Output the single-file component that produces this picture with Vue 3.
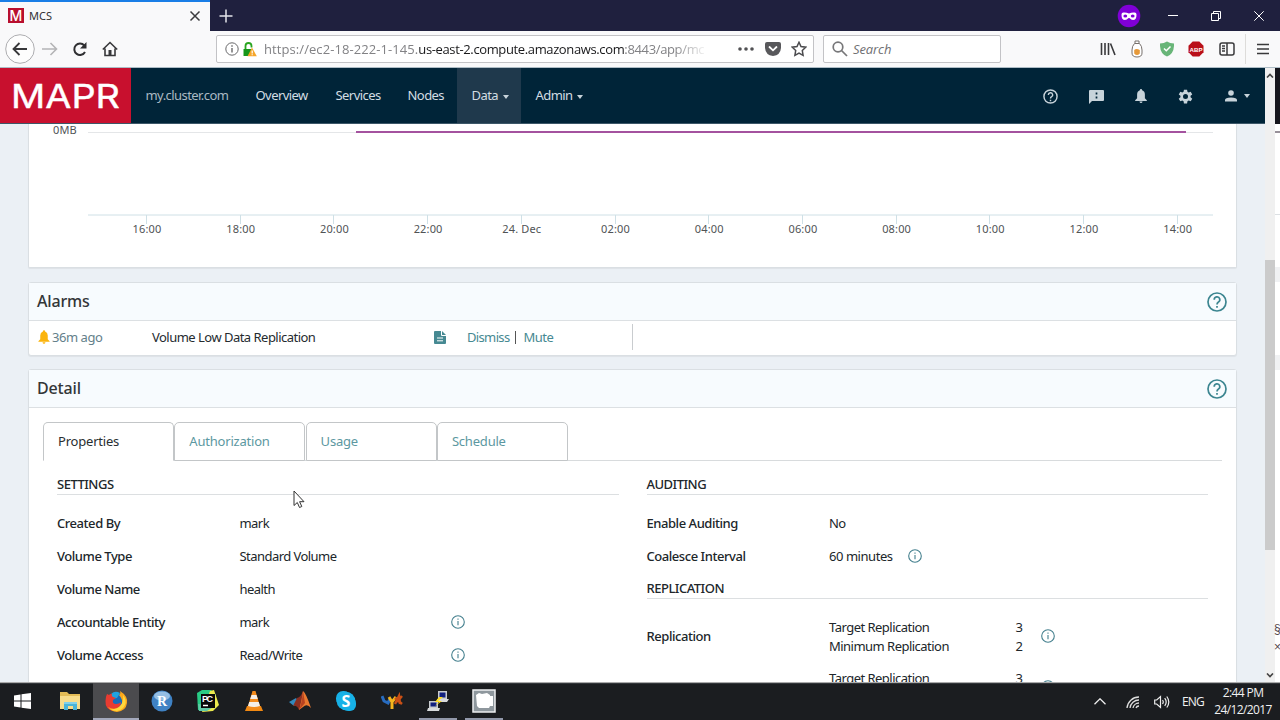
<template>
  <div class="desktop">
    <div class="titlebar">
      <div class="tab">
        <span class="favicon">M</span>
        <span class="tab-title">MCS</span>
        <svg class="tab-close" width="12" height="12" viewBox="0 0 12 12" fill="none" stroke="#3c3c3e" stroke-width="1.5">
          <path d="M1.5 1.5l9 9M10.5 1.5l-9 9"/>
        </svg>
      </div>
      <svg class="new-tab" width="14" height="14" viewBox="0 0 14 14" stroke="#e4e4ea" stroke-width="1.5">
        <path d="M7 .5v13M.5 7h13"/>
      </svg>
      <div class="window-controls">
        <svg width="24" height="24" viewBox="0 0 24 24">
          <circle cx="12" cy="12" r="11.3" fill="#8000d7"/>
          <path d="M4.500 10.500Q4.500 8.200 7 8.500Q9.500 8.400 12 9.500Q14.500 8.400 17 8.500Q19.500 8.200 19.500 10.500Q19.600 16 16 16Q14 16 12.800 14.300Q12 13.500 11.200 14.300Q10 16 8 16Q4.400 16 4.500 10.500z" fill="#fff"/>
          <ellipse cx="8.300" cy="12" rx="1.900" ry="1.500" fill="#8000d7"/>
          <ellipse cx="15.700" cy="12" rx="1.900" ry="1.500" fill="#8000d7"/>
        </svg>
        <svg width="10" height="10" viewBox="0 0 10 10" stroke="#fff"><path d="M0 4.500h10"/></svg>
        <svg width="10" height="10" viewBox="0 0 10 10" fill="none" stroke="#fff">
          <path d="M.5 2.500h7v7h-7zM2.500 2.500v-2h7v7h-2"/>
        </svg>
        <svg width="10" height="10" viewBox="0 0 10 10" stroke="#fff"><path d="M.3.3l9.400 9.400M9.700.3L.3 9.700"/></svg>
      </div>
    </div>

    <div class="toolbar">
      <svg class="back" width="30" height="30" viewBox="0 0 30 30" fill="none">
        <circle cx="15" cy="15" r="14.300" fill="#fdfdfd" stroke="#adadb0"/>
        <path d="M22 15H9M14.500 9L8.500 15l6 6" stroke="#38383a" stroke-width="1.800"/>
      </svg>
      <svg class="forward" width="16" height="14" viewBox="0 0 16 14" fill="none" stroke="#b4b4b6" stroke-width="1.600">
        <path d="M0 7h14M8.500 1l6 6-6 6"/>
      </svg>
      <svg class="reload" width="16" height="16" viewBox="0 0 16 16" fill="none" stroke="#2f2f31" stroke-width="2">
        <path d="M13 11A5.700 5.700 0 1 1 12.300 4.500"/>
        <path d="M14.500 1v6.500H8z" fill="#2f2f31" stroke="none"/>
      </svg>
      <svg class="home" width="16" height="16" viewBox="0 0 16 16" fill="none" stroke="#38383a" stroke-width="1.600">
        <path d="M.8 8.500L8 1.500l7.200 7M3 7.500v7h10v-7"/>
        <path d="M6.500 9h3v5h-3z" fill="#38383a" stroke="none"/>
      </svg>
      <div class="urlbar">
        <svg width="14" height="14" viewBox="0 0 14 14" fill="none" stroke="#68686a">
          <circle cx="7" cy="7" r="6.200"/><path d="M7 6v4.500M7 3.200v1.500" stroke-width="1.400"/>
        </svg>
        <svg class="lock" width="14" height="15" viewBox="0 0 14 15">
          <path d="M2.500 8V4a3 3 0 0 1 6 0v1.500" fill="none" stroke="#2aa520" stroke-width="1.800"/>
          <path d="M.5 7h9v7h-9z" fill="#16961a"/>
          <path d="M9 5.500l4.800 8.800H4.500z" fill="#f5a52a"/>
          <path d="M9.200 8.500v3M9.200 12.200v1" stroke="#fff" stroke-width="1.200"/>
        </svg>
        <span class="url">https://ec2-18-222-1-145.<b>us-east-2.compute.amazonaws.com</b><span class="path">:8443/app/mc</span></span>
        <svg class="dots" width="16" height="4" viewBox="0 0 16 4" fill="#515154">
          <circle cx="2" cy="2" r="1.800"/><circle cx="8" cy="2" r="1.800"/><circle cx="14" cy="2" r="1.800"/>
        </svg>
        <svg class="pocket" width="16" height="14" viewBox="0 0 16 14">
          <path d="M2 0h12q2 0 2 2v4q-.5 7-8 8Q.5 13 0 6V2Q0 0 2 0z" fill="#58585b"/>
          <path d="M4.500 5L8 8.300 11.500 5" fill="none" stroke="#fff" stroke-width="1.800" stroke-linecap="round"/>
        </svg>
        <svg class="star" width="16" height="16" viewBox="0 0 16 16" fill="none" stroke="#4b4b4e" stroke-width="1.500">
          <path d="M8 1.300l2 4.300 4.700.6-3.400 3.300.8 4.800L8 12l-4.100 2.300.8-4.800L1.300 6.200 6 5.600z"/>
        </svg>
      </div>
      <div class="searchbar">
        <svg width="16" height="16" viewBox="0 0 16 16" fill="none" stroke="#777779" stroke-width="1.700">
          <circle cx="6" cy="6" r="4.800"/><path d="M9.500 9.500l5.500 5.500"/>
        </svg>
        <span>Search</span>
      </div>
      <div class="extensions">
        <svg width="16" height="16" viewBox="0 0 16 16" stroke="#3a3a3c" stroke-width="1.600">
          <path d="M1.500 2v12M5 2v12M8.500 2v12M10.500 2.500l4.500 11.500"/>
        </svg>
        <svg width="12" height="18" viewBox="0 0 12 18" fill="none" stroke="#77706c">
          <path d="M4 3V1h4v2M3.500 3.500h5Q11 6 11 10v3q0 4-5 4t-5-4v-3q0-4 2.500-6.500z" fill="#fff"/>
          <path d="M3.200 10q2-2 5.600 0v3.500q-2.800 3-5.600 0z" fill="#e69939" stroke="none"/>
        </svg>
        <svg class="shield" width="14" height="16" viewBox="0 0 14 16">
          <path d="M7 .5Q10 2.500 14 2.500q.5 10-7 13-7.500-3-7-13Q4 2.500 7 .5z" fill="#68b578"/>
          <path d="M4 7.500l2.300 2.300L10.500 5.500" fill="none" stroke="#fff" stroke-width="1.500"/>
        </svg>
        <svg width="16" height="16" viewBox="0 0 16 16">
          <path d="M4.700.5h6.600l4.200 4.200v6.600l-4.200 4.200H4.700L.5 11.300V4.700z" fill="#b90f19"/>
          <text x="1.500" y="10.500" textLength="13" lengthAdjust="spacingAndGlyphs" class="abp">ABP</text>
        </svg>
        <svg width="16" height="14" viewBox="0 0 16 14" fill="none" stroke="#3a3a3c" stroke-width="1.500">
          <rect x="1" y="1" width="14" height="12" rx="2"/><path d="M8 1v12M3 4h3M3 6.500h3M3 9h3"/>
        </svg>
        <span class="divider"></span>
        <svg width="13" height="12" viewBox="0 0 13 12" stroke="#39393b" stroke-width="1.600">
          <path d="M0 1.500h12M0 6h12M0 10.500h12"/>
        </svg>
      </div>
    </div>

    <div class="viewport">
      <div class="page">
        <nav class="navbar">
          <div class="logo">
            <svg width="131" height="55" viewBox="0 0 131 55">
              <text x="11" y="40" textLength="109" lengthAdjust="spacingAndGlyphs">MAPR</text>
            </svg>
          </div>
          <div class="nav-links">
            <a class="cluster">my.cluster.com</a>
            <a v-for="item in navItems" :key="item.name" :class="{ active: item.active }">
              {{ item.name }}<i v-if="item.menu" class="caret"></i>
            </a>
          </div>
          <div class="nav-icons">
            <svg width="15" height="15" viewBox="0 0 24 24" fill="none" stroke="#c7d3da" stroke-width="2.300">
              <circle cx="12" cy="12" r="10.500"/><path d="M8.500 9.500a3.500 3.500 0 1 1 5 3.200Q12 13.500 12 15M12 17v2.500"/>
            </svg>
            <svg width="15" height="15" viewBox="0 0 15 15">
              <path d="M1 1h13q1 0 1 1v9q0 1-1 1H3l-3 3V2q0-1 1-1z" fill="#c7d3da"/>
              <path d="M7.500 3.500v2M7.500 7.500v2" stroke="#002438" stroke-width="1.700"/>
            </svg>
            <svg width="14" height="14" viewBox="0 0 16 18" fill="#c7d3da"><path :d="bell"/></svg>
            <svg width="15" height="15" viewBox="0 0 24 24" fill="#c7d3da">
              <path fill-rule="evenodd" d="M9.500 1h5l.6 3.400 2 1.100 3.200-1.200 2.500 4.300-2.700 2.200v2.400l2.700 2.200-2.500 4.300-3.200-1.200-2 1.100-.6 3.400h-5l-.6-3.400-2-1.100-3.200 1.200-2.500-4.300 2.700-2.200v-2.400L1.200 8.600l2.500-4.300 3.200 1.200 2-1.100zM12 8a4 4 0 1 0 0 8 4 4 0 0 0 0-8z"/>
            </svg>
            <div class="user">
              <svg width="12" height="12" viewBox="0 0 12 12" fill="#c7d3da">
                <circle cx="6" cy="3" r="2.800"/><path d="M0 11.500V10q0-2.600 6-2.600t6 2.600v1.500z"/>
              </svg>
              <i class="caret"></i>
            </div>
          </div>
        </nav>

        <main class="content">
          <section class="card chart">
            <svg width="1207" height="144" viewBox="0 0 1207 144">
              <text x="24" y="11">0MB</text>
              <path d="M59 9.500h1125" stroke="#e4e6e8"/>
              <path d="M327 9h830" stroke="#a4529f" stroke-width="2"/>
              <path d="M59 92h1125" stroke="#cfe0e6"/>
              <g v-for="(t, i) in ticks" :key="t">
                <path :d="`M${Math.round(117 + i * 93.7) + 0.5} 92v9`" stroke="#cfe0e6"/>
                <text :x="118 + i * 93.7" y="109.5" text-anchor="middle">{{ t }}</text>
              </g>
            </svg>
          </section>

          <section class="card alarms">
            <header class="card-head">
              <h2>Alarms</h2>
              <svg class="help" width="20" height="20" viewBox="0 0 20 20"><path :d="help"/></svg>
            </header>
            <div class="alarm-row">
              <svg class="alarm-bell" width="12" height="14" viewBox="0 0 16 18" fill="#fbb40c"><path :d="bell"/></svg>
              <span class="ago">36m ago</span>
              <span class="alarm-name">Volume Low Data Replication</span>
              <svg class="doc" width="12" height="13" viewBox="0 0 12 13">
                <path d="M1 0h7l4 4v8q0 1-1 1H1q-1 0-1-1V1q0-1 1-1z" fill="#468992"/>
                <path d="M7.500 0v4.500H12M3 7h6M3 9.800h6" fill="none" stroke="#fff"/>
              </svg>
              <span class="actions"><a>Dismiss</a><i></i><a>Mute</a></span>
            </div>
          </section>

          <section class="card detail">
            <header class="card-head">
              <h2>Detail</h2>
              <svg class="help" width="20" height="20" viewBox="0 0 20 20"><path :d="help"/></svg>
            </header>
            <div class="tabs">
              <a v-for="(t, i) in tabs" :key="t" :class="{ current: i === 0 }">{{ t }}</a>
            </div>
            <div class="columns">
              <div class="column">
                <h3>SETTINGS</h3>
                <div v-for="row in settings" :key="row.label" class="field">
                  <label>{{ row.label }}</label>
                  <span class="value">{{ row.value }}</span>
                  <svg v-if="row.info" class="info" width="14" height="14" viewBox="0 0 14 14"><path :d="info"/></svg>
                </div>
              </div>
              <div class="column">
                <h3>AUDITING</h3>
                <div class="field"><label>Enable Auditing</label><span>No</span></div>
                <div class="field">
                  <label>Coalesce Interval</label><span class="minutes">60 minutes</span>
                  <svg class="info" width="14" height="14" viewBox="0 0 14 14"><path :d="info"/></svg>
                </div>
                <h3 class="replication-title">REPLICATION</h3>
                <div v-for="group in replication" :key="group.id" class="field double">
                  <label>{{ group.label }}</label>
                  <div class="pairs">
                    <p v-for="pair in group.pairs" :key="pair[0]"><span>{{ pair[0] }}</span><span>{{ pair[1] }}</span></p>
                  </div>
                  <svg class="info" width="14" height="14" viewBox="0 0 14 14"><path :d="info"/></svg>
                </div>
              </div>
            </div>
          </section>
        </main>
      </div>
      <div class="scrollbar">
        <svg width="8" height="5" viewBox="0 0 8 5"><path d="M1 4.500l3-3 3 3" fill="none" stroke="#444" stroke-width="1.600"/></svg>
        <div class="thumb"></div>
        <svg class="down" width="8" height="5" viewBox="0 0 8 5"><path d="M1 .5l3 3 3-3" fill="none" stroke="#444" stroke-width="1.600"/></svg>
      </div>
      <div class="edge"><span>&sect;</span><span>&times;</span></div>
    </div>

    <div class="taskbar">
      <div class="task start"><svg width="17" height="16" viewBox="0 0 17 16" fill="#fff">
        <path d="M0 2.500l6.500-1v6H0zM7.500 1.300L17 0v7.500H7.500zM0 8.500h6.500v6l-6.500-1zM7.500 8.500H17V16l-9.500-1.300z"/>
      </svg></div>
      <div class="task"><svg width="22" height="20" viewBox="0 0 22 20">
        <path d="M1 1h7l2 2h11v15H1z" fill="#e3bb56"/><path d="M1 5h20v13H1z" fill="#f8dc8b"/>
        <path d="M5 19v-8h13v8h-4v-4H9v4z" fill="#4bb3d8"/><path d="M5 11h13v2H5z" fill="#83d0ea"/>
      </svg></div>
      <div class="task open focused"><svg width="24" height="24" viewBox="0 0 24 24">
        <circle cx="12.500" cy="12.500" r="8.500" fill="#176bb8"/>
        <path d="M7 5Q11 1 16 4l-3 5-6 1z" fill="#20a3e1"/>
        <path d="M3 5l2 1q2-2 3-1-1 2 1 3l3 1-3 2q-1 4 3 4 3 0 5-2 0 3-2 5l-6 4Q1 20 1.500 12 1.500 8 3 5z" fill="#e83b31"/>
        <path d="M16 2q8 5 7 12-1 8-10 9-6-.5-9-5 5 3 9 1 6-2 5-8-1-3-3-5 2-1 1-4z" fill="#fba81c"/>
        <path d="M19 6q4 5 2 10-2 5-8 6-4 0-7-2 6 1 10-3 4-4 3-11z" fill="#ffd83d"/>
      </svg></div>
      <div class="task"><svg width="22" height="22" viewBox="0 0 22 22">
        <circle cx="11" cy="11" r="10.500" fill="#3f82c4"/><ellipse cx="11" cy="6" rx="8" ry="4.500" fill="#95bee3"/>
        <text x="11" y="16" text-anchor="middle" class="r-text">R</text>
      </svg></div>
      <div class="task"><svg width="24" height="24" viewBox="0 0 24 24">
        <path d="M1 4l5-3h9l5 5v11l-8 5-10-1z" fill="#28cb84"/><path d="M14 2l4-1 5 15-6 6-11 1z" fill="#ebe94e"/>
        <path d="M2 15l9 1 8 1-8 5H3z" fill="#62cba7"/>
        <path d="M5 5h14v14H5z" fill="#090909"/>
        <text x="6" y="13" textLength="11" class="pc-text">PC</text><path d="M7 16.500h5" stroke="#fff" stroke-width="1.500"/>
      </svg></div>
      <div class="task"><svg width="20" height="22" viewBox="0 0 20 22">
        <path d="M3 16h14l2 5H1z" fill="#f28912"/><path d="M8.500 1h3l5 17q-6.500 3-13 0z" fill="#f28a1b"/>
        <path d="M7.500 5h5l1.300 4H6.200zM5.200 12h9.600l1.200 4q-6 2-12 0z" fill="#f4eee7"/>
      </svg></div>
      <div class="task"><svg width="24" height="22" viewBox="0 0 24 22">
        <path d="M1 12l7-4 3 4-5 4z" fill="#3389bd"/><path d="M5 16l4-8q4-1 6-7l1 12-5 7q-2-5-6-4z" fill="#8a2e21"/>
        <path d="M15 1q3 2 8 17-4-5-8-1l-4 3q2-6 4-19z" fill="#e97930"/><path d="M15 1l2 12-6 7q3-7 4-19z" fill="#b84220"/>
      </svg></div>
      <div class="task"><svg width="22" height="22" viewBox="0 0 22 22">
        <rect x="1" y="1" width="15" height="15" rx="7" fill="#17b1e7"/><rect x="7" y="7" width="14" height="14" rx="6" fill="#17b1e7"/>
        <circle cx="11" cy="11" r="9.300" fill="#17b1e7"/>
        <text x="11" y="17" text-anchor="middle" class="s-text">S</text>
      </svg></div>
      <div class="task"><svg width="22" height="18" viewBox="0 0 22 18" fill="none" stroke-width="3">
        <path d="M1 4l2 5 4 2 2-4" stroke="#286cc0"/><path d="M8 5l3 5 4-5M11 10v7" stroke="#f5b51e"/>
        <path d="M14 12l4-8 1 8M14 6l7 6M21 4l-5 6" stroke="#c94f15" stroke-width="2.500"/>
      </svg></div>
      <div class="task open"><svg width="22" height="22" viewBox="0 0 22 22">
        <path d="M11 1h9v9h-9zM2 11h9v8H2z" fill="#c9ccd0"/><path d="M12.500 2.500h6v5h-6zM3.500 12.500h6v4h-6z" fill="#101f7e"/>
        <path d="M10 9h12l-2 3h-9zM1 18h12l-1 3H0z" fill="#d8dadc"/><path d="M12 7l-4 5h4l-4 4 7-5h-4l5-4z" fill="#ffdc22"/>
      </svg></div>
      <div class="task open"><svg width="24" height="24" viewBox="0 0 24 24">
        <path d="M1 1h22v22H1z" fill="#8e979d" stroke="#eef0f1" stroke-width="1.500"/>
        <path d="M4 6l3-2 3 1 5-1 3 2v1h3v10h-3l-1 2H7l-2-2z" fill="#fff"/>
      </svg></div>

      <div class="tray">
        <svg width="12" height="7" viewBox="0 0 12 7" fill="none" stroke="#eee" stroke-width="1.300"><path d="M.5 6.200L6 .8l5.500 5.400"/></svg>
        <svg width="14" height="14" viewBox="0 0 14 14" fill="none" stroke="#dedede" stroke-width="1.300">
          <path d="M1 13A12 12 0 0 1 13 2M4 13a9 9 0 0 1 9-8M7 13a6 6 0 0 1 6-5M10 13a3 3 0 0 1 3-2"/>
        </svg>
        <svg width="16" height="14" viewBox="0 0 16 14" fill="none" stroke="#eee" stroke-width="1.200">
          <path d="M.7 5v4h2L6.500 12.500v-11L2.700 5zM8.500 5q1.500 2 0 4M10.700 3.200q3 3.800 0 7.600M12.800 1.500q4 5.500 0 11"/>
        </svg>
        <span class="lang">ENG</span>
        <div class="clock"><span>2:44 PM</span><span>24/12/2017</span></div>
      </div>
    </div>

    <svg class="pointer" width="12" height="19" viewBox="0 0 12 19">
      <path d="M1 1v14.500l3.300-3 2.200 5 2.300-1-2.200-4.800H11z" fill="#fff" stroke="#333"/>
    </svg>
  </div>
</template>

<script setup>
const navItems = [
  { name: 'Overview' },
  { name: 'Services' },
  { name: 'Nodes' },
  { name: 'Data', menu: true, active: true },
  { name: 'Admin', menu: true }
]

const ticks = ['16:00', '18:00', '20:00', '22:00', '24. Dec', '02:00', '04:00', '06:00', '08:00', '10:00', '12:00', '14:00']
const tabs = ['Properties', 'Authorization', 'Usage', 'Schedule']

const settings = [
  { label: 'Created By', value: 'mark' },
  { label: 'Volume Type', value: 'Standard Volume' },
  { label: 'Volume Name', value: 'health' },
  { label: 'Accountable Entity', value: 'mark', info: true },
  { label: 'Volume Access', value: 'Read/Write', info: true }
]

const replication = [
  { id: 1, label: 'Replication', pairs: [['Target Replication', 3], ['Minimum Replication', 2]] },
  { id: 2, label: '', pairs: [['Target Replication', 3]] }
]

// shared icon shapes
const bell = 'M8 0q1.500 0 1.500 1.700Q13 3 13 7v5l2.500 2.500v.8H.5v-.8L3 12V7q0-4 3.500-5.300Q6.500 0 8 0zM6 16h4q-.3 2-2 2t-2-2z'
const help = 'M10 1a9 9 0 1 0 0 18 9 9 0 0 0 0-18zM7.200 7.700a2.800 2.800 0 1 1 4 2.500Q10 11 10 12.500M10 14v1.800'
const info = 'M7 .7a6.300 6.300 0 1 0 0 12.600A6.300 6.300 0 0 0 7 .7zM7 6v4.300M7 3.500v1.300'
</script>

<style>
body {
  margin: 0;
  overflow: hidden;
}
</style>

<style scoped>
.desktop {
  position: relative;
  width: 1280px;
  height: 720px;
  overflow: hidden;
  display: flex;
  flex-direction: column;
  background: #fff;
  color: #252b2f;
  font-family: 'Noto Sans', 'Open Sans', sans-serif;
  font-size: 13px;
}

svg { display: block; flex-shrink: 0; }

.titlebar {
  height: 31px;
  display: flex;
  align-items: center;
  background: #1f203e;
}

.tab {
  box-sizing: border-box;
  width: 210px;
  height: 31px;
  padding: 0 9px 2px 8px;
  border-top: 2px solid #1a7ee6;
  background: #f9f9fa;
  display: flex;
  align-items: center;
}

.favicon {
  width: 16px;
  height: 15px;
  background: #b80f2e;
  color: #fff;
  font: 500 14px/15px 'Inter', sans-serif;
  text-align: center;
}

.tab-title { margin-left: 5px; font-size: 11px; color: #303033; }
.tab-close { margin-left: auto; }
.new-tab { margin-left: 9px; }

.window-controls {
  margin-left: auto;
  padding-right: 16px;
  display: flex;
  align-items: center;
  gap: 33px;
}

.window-controls svg:first-child { margin-right: -6px; }

.toolbar {
  box-sizing: border-box;
  height: 37px;
  padding: 0 10px 0 5px;
  background: #f9f9fa;
  border-bottom: 1px solid #aebdc6;
  display: flex;
  align-items: center;
}

.forward { margin-left: 7px; }
.reload { margin-left: 14px; }
.home { margin-left: 14px; }

.urlbar, .searchbar {
  box-sizing: border-box;
  height: 28px;
  border: 1px solid #c3c3c6;
  background: #fff;
  border-radius: 2px;
  display: flex;
  align-items: center;
  font-family: 'Open Sans', sans-serif;
}

.urlbar { width: 598px; margin-left: 98px; padding: 0 6px 0 8px; }
.lock { margin-left: 4px; }

.url {
  width: 446px;
  margin-left: 7px;
  overflow: hidden;
  white-space: nowrap;
  color: #828285;
  letter-spacing: 0.08px;
  -webkit-mask-image: linear-gradient(90deg, #000 410px, transparent 444px);
  mask-image: linear-gradient(90deg, #000 410px, transparent 444px);
}

.url b { font-weight: 400; color: #18181a; letter-spacing: -0.37px; }
.url .path { letter-spacing: -0.35px; }
.dots { margin-left: auto; margin-right: -1px; }
.pocket { margin-left: 12px; }
.star { margin-left: 10px; }

.searchbar {
  width: 178px;
  margin-left: 9px;
  padding-left: 8px;
  gap: 5px;
  font-style: italic;
  color: #707073;
  letter-spacing: -0.1px;
}

.extensions {
  margin-left: auto;
  display: flex;
  align-items: center;
  gap: 14.6px;
}

.shield { margin-left: 2px; }
.divider { width: 1px; height: 30px; background: #dddcda; margin: 0 -4px; }
.abp { font: 700 6px 'Liberation Sans', sans-serif; fill: #fff; }

.viewport { height: 615px; display: flex; }

.page {
  width: 1265px;
  height: 615px;
  overflow: hidden;
  background: #ebf0f5;
}

.navbar {
  box-sizing: border-box;
  height: 56px;
  background: #002438;
  border-bottom: 1px solid #3c5768;
  display: flex;
  color: #d3dde3;
}

.logo { width: 131px; height: 55px; background: #c8102e; }
.logo text { font: 400 33px 'Inter', sans-serif; fill: #fff; stroke: #fff; stroke-width: 0.4; }

.nav-links {
  display: grid;
  grid-template-columns: 110px 80px 72px 64px 64px 80px;
}

.nav-links a {
  padding-left: 14.5px;
  line-height: 55px;
  white-space: nowrap;
  letter-spacing: -0.56px;
}

.nav-links .cluster { color: #aab9c2; }
.nav-links .active { background: #1f394c; }

.caret {
  display: inline-block;
  margin-left: 4.5px;
  border: 3.5px solid transparent;
  border-top: 4px solid #c7d3da;
  border-bottom: 0;
  vertical-align: 1px;
}

.nav-icons {
  margin-left: auto;
  padding: 1px 15px 0 0;
  display: flex;
  align-items: center;
  gap: 30.3px;
}

.user { display: flex; align-items: center; gap: 3px; margin-left: 1px; }

.content {
  width: 1209px;
  margin-left: 28px;
  display: flex;
  flex-direction: column;
  gap: 14px;
}

.card {
  box-sizing: border-box;
  flex-shrink: 0;
  background: #fff;
  border: 1px solid #dadfe3;
  border-radius: 3px;
  box-shadow: 0 1px 1px rgba(0, 0, 0, 0.06);
}

.chart { height: 144px; border-top: 0; border-radius: 0 0 2px 2px; }
.chart svg { margin-top: -1px; }
.chart text { font-size: 11px; fill: #505355; letter-spacing: 0.15px; }

.card-head {
  box-sizing: border-box;
  height: 38px;
  padding: 0 9px 0 8px;
  display: flex;
  align-items: center;
  justify-content: space-between;
  background: #f7fbfe;
  border-bottom: 1px solid #dce0e3;
}

.card-head h2 {
  margin: 0;
  padding-bottom: 2px;
  font-size: 16px;
  font-weight: 500;
  color: #333638;
  letter-spacing: -0.15px;
}

.help { fill: none; stroke: #3b8590; stroke-width: 1.7; }

.alarms { height: 74px; margin-bottom: -1px; }

.alarm-row { height: 32px; display: flex; align-items: center; padding-left: 9px; letter-spacing: -0.52px; }
.ago { width: 100px; margin-left: 2px; color: #64808a; letter-spacing: -0.45px; }
.alarm-name { width: 282px; }

.actions {
  box-sizing: border-box;
  width: 166px;
  height: 26px;
  margin-left: 21px;
  border-right: 1px solid #c9cccf;
  display: flex;
  align-items: center;
  color: #468992;
}

.actions a:first-child { letter-spacing: -0.65px; }
.actions i { width: 1px; height: 13px; margin: 0 7px 0 6px; background: #555; }

.detail { height: 480px; }

.tabs {
  height: 39px;
  margin: 14px 14px 0;
  display: flex;
  box-shadow: inset 0 -1px #d8dbdd;
}

.tabs a {
  box-sizing: border-box;
  width: 131px;
  height: 39px;
  margin-right: 0.3px;
  padding-left: 14px;
  line-height: 37px;
  background: #fff;
  border: 1px solid #c3c6c8;
  border-radius: 5px 5px 0 0;
  color: #5c98a1;
  letter-spacing: -0.2px;
}

.tabs .current { color: #292e31; border-bottom-color: #fff; }

.columns { display: flex; gap: 28px; padding: 14px 28px 0; color: #20262a; }
.column { width: 562px; }

.column h3 {
  box-sizing: border-box;
  height: 20px;
  margin: 0 0 12px;
  border-bottom: 1px solid #dcdfe1;
  font-size: 13px;
  line-height: 19px;
  font-weight: 500;
  letter-spacing: -0.5px;
}

.field { height: 32.9px; display: flex; align-items: center; letter-spacing: -0.55px; }
.field label { width: 182.5px; font-weight: 500; letter-spacing: -0.45px; }
.value { width: 211.5px; }
.info { fill: none; stroke: #437f8d; stroke-width: 1.1; }
.minutes { width: 79px; letter-spacing: -0.45px; }

.column .replication-title { margin: 6px 0 18px; }
.double { height: 39px; margin-bottom: 12px; letter-spacing: -0.52px; }
.pairs { align-self: flex-start; padding-top: 1px; }
.pairs p { width: 193.5px; height: 19px; margin: 0; line-height: 19px; display: flex; justify-content: space-between; }
.double .info { margin-left: 18px; }

.scrollbar {
  box-sizing: border-box;
  width: 10px;
  height: 615px;
  padding: 5px 0;
  background: #f0f0f0;
  display: flex;
  flex-direction: column;
  align-items: center;
}

.thumb { width: 10px; height: 290px; margin-top: 182px; background: #cbcbcb; }
.down { margin-top: auto; }

/* sliver of the neighbouring window */
.edge {
  box-sizing: border-box;
  width: 5px;
  padding-top: 552px;
  font: 12px/18px 'Liberation Sans', sans-serif;
  color: #55474c;
  background: linear-gradient(#15151c 56px, #fff 56px 63px, #98919a 63px 65px, #fff 65px 146px, #dce0e3 146px 147px, #fff 147px 199px, #f0f1f3 199px 214px, #fff 214px 287px, #f0f1f3 287px 302px, #fff 302px);
}

.edge span { display: block; margin-left: -1px; }

.taskbar {
  position: relative;
  height: 37px;
  background: #1b1d20;
  display: flex;
  box-shadow: inset 0 1px #33363a, 0 -1px #aaa;
}

.task {
  box-sizing: border-box;
  width: 46px;
  height: 37px;
  padding: 0 0 1px;
  display: flex;
  align-items: center;
  justify-content: center;
}

.task.start { width: 47px; padding-right: 2px; }
.task.open { background: linear-gradient(#9298aa, #9298aa) center bottom / 38px 2px no-repeat; }
.task.focused { background: #4b4b4e; box-shadow: inset 0 -2px #a3a8bb; }
.r-text { font: 700 14px 'Liberation Serif', serif; fill: #fff; }
.pc-text { font: 700 9px 'Liberation Sans', sans-serif; fill: #fff; }
.s-text { font: 700 16px 'Open Sans', sans-serif; fill: #fff; }

.tray {
  margin-left: auto;
  display: flex;
  align-items: center;
  color: #f1f1f1;
  font: 12px 'Open Sans', sans-serif;
}

.tray svg { margin-right: 14px; }
.tray svg:first-child { margin-right: 20px; }
.lang { width: 22px; letter-spacing: -0.8px; margin-left: -2px; padding-bottom: 1px; }

.clock {
  width: 56px;
  margin: 0 9px 2px 11px;
  display: flex;
  flex-direction: column;
  align-items: center;
  line-height: 17px;
  letter-spacing: -0.6px;
}

.pointer { position: absolute; left: 293px; top: 490px; }
</style>
